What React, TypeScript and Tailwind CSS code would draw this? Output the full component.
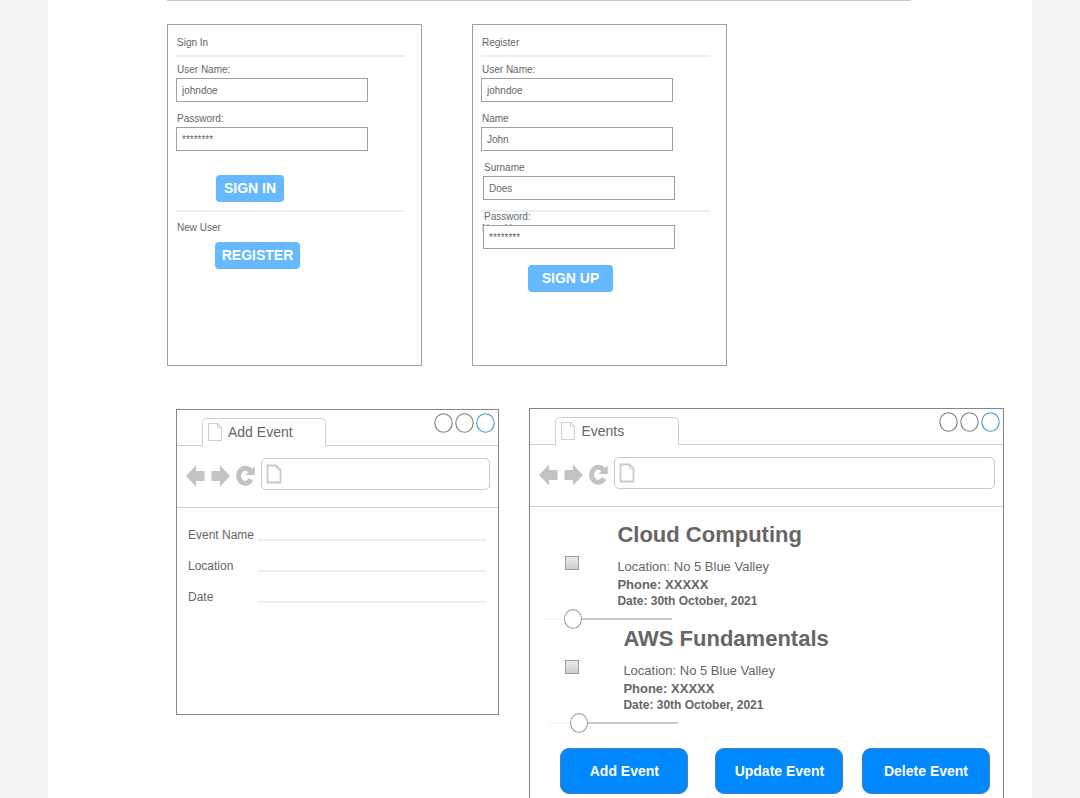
import type { ReactNode } from "react";
import clsx from "clsx";

function Divider() {
  return <div className="h-0.5 bg-[#e6f1f9]"></div>;
}

function Field({ id, label, value }: { id: string; label: string; value: string }) {
  return (
    <div className="flex flex-col">
      <label htmlFor={id} className="pl-px text-[10px] leading-4">
        {label}
      </label>
      <input
        id={id}
        type="text"
        defaultValue={value}
        className="h-6 w-48 max-w-full border border-[#a0a0a0] bg-white px-[5px] text-[10px]"
      />
    </div>
  );
}

function SmallButton({ children, className }: { children: ReactNode; className: string }) {
  return (
    <button
      type="button"
      className={clsx(
        "block h-[27px] rounded-[4px] bg-[#66b8ff] text-center text-[14px] leading-[27px] font-bold text-white",
        className
      )}
    >
      {children}
    </button>
  );
}

function SignInCard() {
  return (
    <form className="min-h-[342px] min-w-0 flex-1 border border-[#a0a0a0] pt-[10px] pr-4 pl-2">
      <h2 className="mb-1 pl-px text-[10px] leading-4">Sign In</h2>
      <Divider />
      <div className="mt-[5px] flex flex-col gap-[9px]">
        <Field id="signin-user" label="User Name:" value="johndoe" />
        <Field id="signin-password" label="Password:" value="********" />
      </div>
      <SmallButton className="mt-6 mb-2 ml-10 w-[68px]">SIGN IN</SmallButton>
      <Divider />
      <p className="mt-2 pl-px text-[10px] leading-4">New User</p>
      <SmallButton className="mt-1.5 ml-[39px] w-[85px]">REGISTER</SmallButton>
    </form>
  );
}

function RegisterCard() {
  return (
    <form className="min-h-[342px] min-w-0 flex-1 border border-[#a0a0a0] pt-[10px] pr-4 pl-2">
      <h2 className="mb-1 pl-px text-[10px] leading-4">Register</h2>
      <Divider />
      <div className="mt-[5px] flex flex-col gap-[9px]">
        <Field id="register-user" label="User Name:" value="johndoe" />
        <Field id="register-name" label="Name" value="John" />
        <div className="pl-0.5">
          <Field id="register-surname" label="Surname" value="Does" />
        </div>
        {/* the password field sits over the old divider and caption */}
        <div className="relative">
          <div className="absolute inset-x-0 top-px">
            <Divider />
          </div>
          <p className="absolute top-3 left-px text-[10px] leading-4">New User</p>
          <div className="relative pl-0.5">
            <Field id="register-password" label="Password:" value="********" />
          </div>
        </div>
      </div>
      <SmallButton className="mt-4 ml-[47px] w-[85px]">SIGN UP</SmallButton>
    </form>
  );
}

function PageIcon({ bold }: { bold?: boolean }) {
  return (
    <svg width="16" height="20" viewBox="0 0 16 20" fill="none" stroke={bold ? "#cacaca" : "#cfcfcf"} strokeWidth={bold ? 1.8 : 1.1}>
      <path d="M1.5 1.5H10.5L14.5 5.7V18.5H1.5Z" />
      <path d="M10.5 1.5V5.7H14.5" strokeWidth="0.8" />
    </svg>
  );
}

function ArrowIcon({ right }: { right?: boolean }) {
  return (
    <svg width="19" height="22" viewBox="0 0 19 22" fill="#c3c3c3">
      {right ? (
        <path d="M19 11L9 0.5V6H0.5V16H9V21.5Z" />
      ) : (
        <path d="M0 11L10 0.5V6H18.5V16H10V21.5Z" />
      )}
    </svg>
  );
}

function ReloadIcon() {
  return (
    <svg width="19" height="22" viewBox="0 0 19 22" fill="none">
      <path d="M14.4 6.2A6.6 7.5 0 1 0 15 14.4" stroke="#c3c3c3" strokeWidth="5" />
      <path d="M18.8 1.6V10H9.4Z" fill="#c3c3c3" />
    </svg>
  );
}

function WindowCircle({ color }: { color: string }) {
  return (
    <svg width="19" height="20" viewBox="0 0 19 20" fill="none">
      <ellipse cx="9.5" cy="10" rx="8.7" ry="9.3" stroke={color} strokeWidth="1.1" />
    </svg>
  );
}

function BrowserWindow({ title, className, children }: { title: string; className: string; children: ReactNode }) {
  return (
    <section className={clsx("min-w-0 border-[#858585]", className)}>
      <div className="flex h-9 items-end">
        <div className="w-[25px] self-stretch border-b border-[#cfcfcf]"></div>
        <div className="flex h-7 w-[124px] items-center gap-[5px] rounded-t-[5px] border-x border-t border-[#cfcfcf] pb-px pl-1">
          <PageIcon />
          <h2 className="text-[14px] leading-4">{title}</h2>
        </div>
        <div className="flex flex-1 items-start justify-end gap-0.5 self-stretch border-b border-[#cfcfcf] pt-[3px] pr-[3px]">
          <WindowCircle color="#7d7d7d" />
          <WindowCircle color="#7d7d7d" />
          <WindowCircle color="#3a9bd0" />
        </div>
      </div>
      <div className="flex h-[62px] items-start gap-1.5 border-b border-[#cfcfcf] pt-3 pr-2 pl-[9px]">
        <div className="flex h-9 items-center gap-1.5">
          <button type="button" aria-label="Back">
            <ArrowIcon />
          </button>
          <button type="button" aria-label="Forward">
            <ArrowIcon right />
          </button>
          <button type="button" aria-label="Reload">
            <ReloadIcon />
          </button>
        </div>
        <div className="flex h-8 min-w-0 flex-1 items-center rounded-[5px] border border-[#c9c9c9] pl-1">
          <PageIcon bold />
          <input type="text" aria-label="Address" className="min-w-0 flex-1 px-2 text-[14px] outline-none" />
        </div>
      </div>
      {children}
    </section>
  );
}

const addEventFields = [
  { id: "event-name", label: "Event Name" },
  { id: "event-location", label: "Location" },
  { id: "event-date", label: "Date" },
];

function AddEventForm() {
  return (
    <form className="pt-0.5 pr-3 pb-[111px] pl-[11px]">
      {addEventFields.map((field) => (
        <div key={field.id} className="flex h-[31px] items-end">
          <label htmlFor={field.id} className="w-[70px] text-[12px] leading-3">
            {field.label}
          </label>
          <input
            id={field.id}
            type="text"
            className="h-5 min-w-0 flex-1 border-b-2 border-[#e6f1f9] text-[12px] outline-none"
          />
        </div>
      ))}
    </form>
  );
}

const events = [
  { name: "Cloud Computing", textClass: "pl-[38px]", sliderClass: "ml-[14px]" },
  { name: "AWS Fundamentals", textClass: "pl-11", sliderClass: "ml-5" },
];

function EventItem({ name, textClass, sliderClass }: { name: string; textClass: string; sliderClass: string }) {
  return (
    <li>
      <div className="flex items-start pl-[35px]">
        <input
          type="checkbox"
          aria-label={name}
          className="mt-[35px] size-3.5 shrink-0 appearance-none border border-[#9c9c9c] bg-linear-to-b from-[#eaeaea] to-[#cfcfcf]"
        />
        <div className={textClass}>
          <h3 className="text-[22px] leading-7 font-bold">{name}</h3>
          <p className="mt-2.5 text-[13px] leading-4">Location: No 5 Blue Valley</p>
          <p className="mt-0.5 text-[13px] leading-4 font-bold">Phone: XXXXX</p>
          <p className="text-[12px] leading-4 font-bold">Date: 30th October, 2021</p>
        </div>
      </div>
      <input
        type="range"
        aria-label={name + " position"}
        defaultValue={18}
        className={clsx(
          "-mb-1 block h-5 w-32 appearance-none bg-transparent",
          "[&::-webkit-slider-runnable-track]:h-0.5 [&::-webkit-slider-runnable-track]:bg-[linear-gradient(to_right,#f5f5f5_22%,#c8c8c8_22%)]",
          "[&::-webkit-slider-thumb]:-mt-[9px] [&::-webkit-slider-thumb]:h-5 [&::-webkit-slider-thumb]:w-[18px] [&::-webkit-slider-thumb]:appearance-none [&::-webkit-slider-thumb]:rounded-[50%] [&::-webkit-slider-thumb]:border [&::-webkit-slider-thumb]:border-[#999999] [&::-webkit-slider-thumb]:bg-white",
          sliderClass
        )}
      />
    </li>
  );
}

function ActionButton({ children }: { children: ReactNode }) {
  return (
    <button
      type="button"
      className="h-[46px] w-32 rounded-[9px] border border-[#4a7fb5] bg-[#0088ff] text-[14px] font-bold text-white"
    >
      {children}
    </button>
  );
}

function EventList() {
  return (
    <div className="pt-3.5 pb-1">
      <ul>
        {events.map((event) => (
          <EventItem key={event.name} {...event} />
        ))}
      </ul>
      <div className="mt-[19px] flex justify-between pr-[13px] pl-[30px]">
        <div className="flex gap-[27px]">
          <ActionButton>Add Event</ActionButton>
          <ActionButton>Update Event</ActionButton>
        </div>
        <ActionButton>Delete Event</ActionButton>
      </div>
    </div>
  );
}

function App() {
  return (
    <div className="min-h-screen bg-[#f1f2f4] px-12 font-['Liberation_Sans',Arial,sans-serif] text-[#666666]">
      <main className="min-h-screen bg-white">
        <hr className="mr-[121px] ml-[119px] border-t border-[#c6c6c6]" />
        <div className="flex gap-[50px] pt-[23px] pr-[305px] pl-[119px]">
          <SignInCard />
          <RegisterCard />
        </div>
        <div className="mt-[42px] flex items-start gap-[30px] pr-7 pl-32">
          <BrowserWindow title="Add Event" className="mt-px flex-[323] border">
            <AddEventForm />
          </BrowserWindow>
          <BrowserWindow title="Events" className="flex-[475] border-x border-t">
            <EventList />
          </BrowserWindow>
        </div>
      </main>
    </div>
  );
}

export default App;
